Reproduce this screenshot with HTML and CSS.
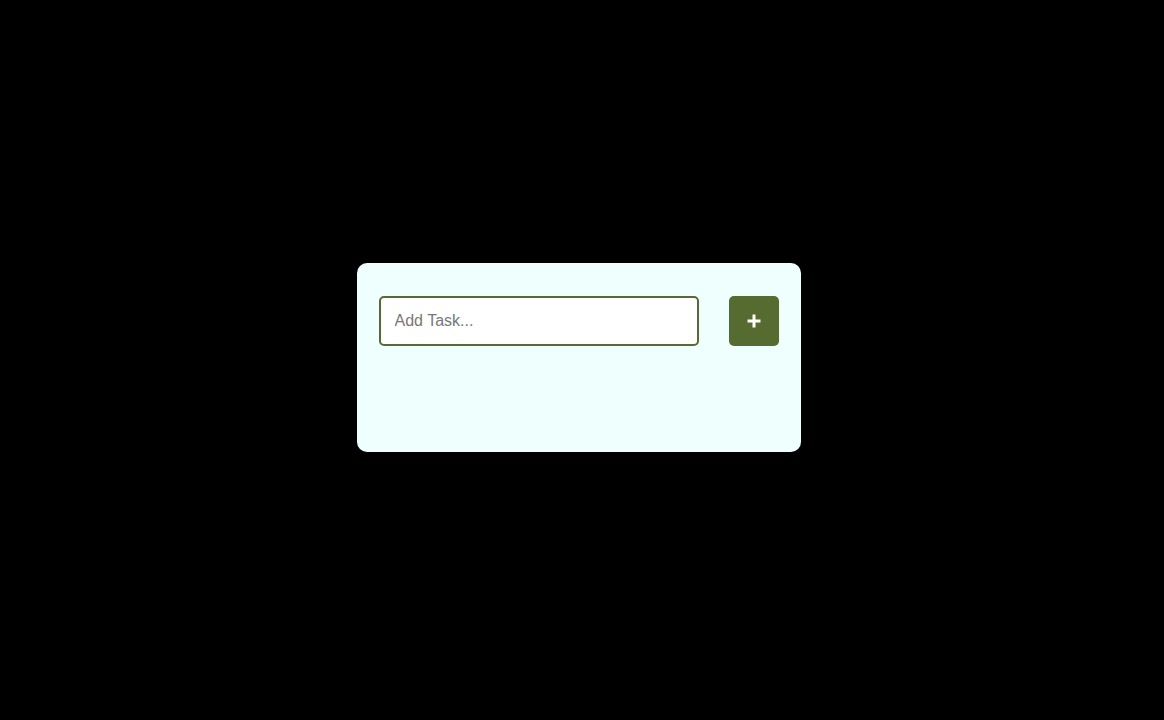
FILE: index.html
```html
<!DOCTYPE html>
<html lang="en">
<head>
<meta charset="utf-8">
<title>To-Do</title>
<link rel="stylesheet" href="styles.css">
</head>
<body>
<main class="page">
  <section class="card">
    <form class="task-form" onsubmit="return false">
      <input class="task-input" type="text" placeholder="Add Task..." autofocus>
      <button class="add-btn" type="submit" aria-label="Add task">
        <svg width="14" height="14" viewBox="0 0 14 14" aria-hidden="true">
          <path d="M7 0.5V13.5M0.5 7H13.5" stroke="#ffffff" stroke-width="3" fill="none"/>
        </svg>
      </button>
    </form>
    <ul class="task-list"></ul>
  </section>
</main>
</body>
</html>
```
FILE: styles.css
```css
* { box-sizing: border-box; }
html, body {
  margin: 0;
  height: 100%;
  background: #000000;
  font-family: "Liberation Sans", Arial, sans-serif;
}
.page {
  height: 100%;
  display: flex;
  align-items: center;
  justify-content: center;
  padding: 0 7px 5px 0;
}
.card {
  width: 444px;
  height: 189px;
  background: #effffe;
  border-radius: 10px;
  padding: 33px 22px 22px 22px;
}
.task-form {
  display: flex;
  align-items: center;
  justify-content: space-between;
}
.task-input {
  width: 320px;
  height: 50px;
  border: 2px solid #556b2f;
  border-radius: 5px;
  background: #ffffff;
  padding: 0 14px;
  font-family: "Liberation Sans", Arial, sans-serif;
  font-size: 16px;
  color: #333333;
  outline: none;
}
.task-input::placeholder { color: #777777; }
.add-btn {
  width: 50px;
  height: 50px;
  border: none;
  border-radius: 5px;
  background: #556b2f;
  display: flex;
  align-items: center;
  justify-content: center;
  padding: 0;
  cursor: pointer;
}
.task-list {
  list-style: none;
  margin: 0;
  padding: 0;
}
```
